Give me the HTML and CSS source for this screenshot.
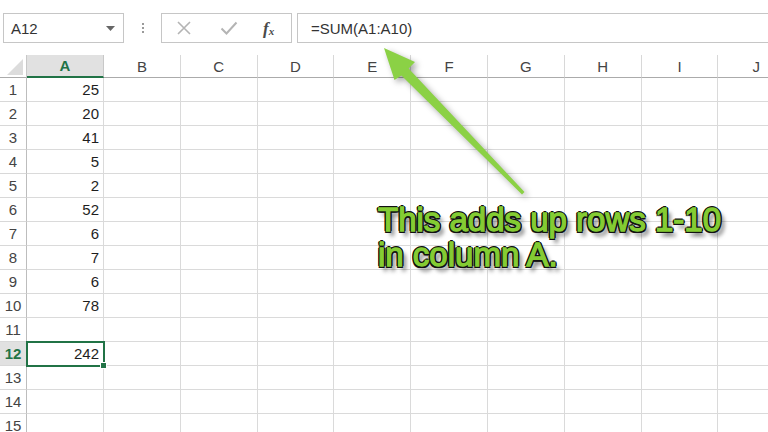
FILE: index.html
```html
<!DOCTYPE html>
<html>
<head>
<meta charset="utf-8">
<link rel="stylesheet" href="styles.css">
</head>
<body>
<div class="app">
  <div class="toolbar">
    <div class="namebox">
      <span class="nametext">A12</span>
      <svg class="dd" width="9" height="5" viewBox="0 0 9 5"><path d="M0 0H9L4.5 5Z" fill="#666"/></svg>
    </div>
    <div class="grip"><span></span><span></span><span></span></div>
    <div class="btnbox">
      <svg class="ico" width="16" height="16" viewBox="0 0 16 16"><path d="M2 2L14 14M14 2L2 14" stroke="#b4b4b4" stroke-width="1.6" fill="none"/></svg>
      <svg class="ico" width="18" height="16" viewBox="0 0 18 16"><path d="M1.5 8.5L6.5 13.5L16.5 2.5" stroke="#b4b4b4" stroke-width="2" fill="none"/></svg>
      <span class="fx">f<sub>x</sub></span>
    </div>
    <div class="formula">=SUM(A1:A10)</div>
  </div>

  <div class="sheet">
    <div class="row head">
      <div class="corner"><svg width="16" height="16" viewBox="0 0 16 16"><path d="M16 0V16H0Z" fill="#dcdcdc"/></svg></div>
      <div class="ch sel">A</div><div class="ch">B</div><div class="ch">C</div><div class="ch">D</div><div class="ch">E</div><div class="ch">F</div><div class="ch">G</div><div class="ch">H</div><div class="ch">I</div><div class="ch">J</div>
    </div>
    <div class="row"><div class="rh">1</div><div class="c n">25</div><div class="c"></div><div class="c"></div><div class="c"></div><div class="c"></div><div class="c"></div><div class="c"></div><div class="c"></div><div class="c"></div><div class="c"></div></div>
    <div class="row"><div class="rh">2</div><div class="c n">20</div><div class="c"></div><div class="c"></div><div class="c"></div><div class="c"></div><div class="c"></div><div class="c"></div><div class="c"></div><div class="c"></div><div class="c"></div></div>
    <div class="row"><div class="rh">3</div><div class="c n">41</div><div class="c"></div><div class="c"></div><div class="c"></div><div class="c"></div><div class="c"></div><div class="c"></div><div class="c"></div><div class="c"></div><div class="c"></div></div>
    <div class="row"><div class="rh">4</div><div class="c n">5</div><div class="c"></div><div class="c"></div><div class="c"></div><div class="c"></div><div class="c"></div><div class="c"></div><div class="c"></div><div class="c"></div><div class="c"></div></div>
    <div class="row"><div class="rh">5</div><div class="c n">2</div><div class="c"></div><div class="c"></div><div class="c"></div><div class="c"></div><div class="c"></div><div class="c"></div><div class="c"></div><div class="c"></div><div class="c"></div></div>
    <div class="row"><div class="rh">6</div><div class="c n">52</div><div class="c"></div><div class="c"></div><div class="c"></div><div class="c"></div><div class="c"></div><div class="c"></div><div class="c"></div><div class="c"></div><div class="c"></div></div>
    <div class="row"><div class="rh">7</div><div class="c n">6</div><div class="c"></div><div class="c"></div><div class="c"></div><div class="c"></div><div class="c"></div><div class="c"></div><div class="c"></div><div class="c"></div><div class="c"></div></div>
    <div class="row"><div class="rh">8</div><div class="c n">7</div><div class="c"></div><div class="c"></div><div class="c"></div><div class="c"></div><div class="c"></div><div class="c"></div><div class="c"></div><div class="c"></div><div class="c"></div></div>
    <div class="row"><div class="rh">9</div><div class="c n">6</div><div class="c"></div><div class="c"></div><div class="c"></div><div class="c"></div><div class="c"></div><div class="c"></div><div class="c"></div><div class="c"></div><div class="c"></div></div>
    <div class="row"><div class="rh">10</div><div class="c n">78</div><div class="c"></div><div class="c"></div><div class="c"></div><div class="c"></div><div class="c"></div><div class="c"></div><div class="c"></div><div class="c"></div><div class="c"></div></div>
    <div class="row"><div class="rh">11</div><div class="c n"></div><div class="c"></div><div class="c"></div><div class="c"></div><div class="c"></div><div class="c"></div><div class="c"></div><div class="c"></div><div class="c"></div><div class="c"></div></div>
    <div class="row"><div class="rh rsel">12</div><div class="c n active">242<span class="handle"></span></div><div class="c"></div><div class="c"></div><div class="c"></div><div class="c"></div><div class="c"></div><div class="c"></div><div class="c"></div><div class="c"></div><div class="c"></div></div>
    <div class="row"><div class="rh">13</div><div class="c n"></div><div class="c"></div><div class="c"></div><div class="c"></div><div class="c"></div><div class="c"></div><div class="c"></div><div class="c"></div><div class="c"></div><div class="c"></div></div>
    <div class="row"><div class="rh">14</div><div class="c n"></div><div class="c"></div><div class="c"></div><div class="c"></div><div class="c"></div><div class="c"></div><div class="c"></div><div class="c"></div><div class="c"></div><div class="c"></div></div>
    <div class="row"><div class="rh">15</div><div class="c n"></div><div class="c"></div><div class="c"></div><div class="c"></div><div class="c"></div><div class="c"></div><div class="c"></div><div class="c"></div><div class="c"></div><div class="c"></div></div>
  </div>

  <svg class="arrow" width="768" height="432" viewBox="0 0 768 432">
    <polygon points="384,48 415,62 408.6,68.5 524.5,192 522,194.5 401.4,75.5 394.5,80" fill="#8bd145"/>
  </svg>
  <div class="note">This adds up rows 1-10<br>in column A.</div>
</div>
</body>
</html>
```

FILE: styles.css
```css
html, body {
  margin: 0;
  padding: 0;
  background: #ffffff;
}
body {
  width: 768px;
  height: 432px;
  overflow: hidden;
  font-family: "Liberation Sans", Arial, sans-serif;
}
.app {
  position: relative;
  width: 768px;
  height: 432px;
  overflow: hidden;
}
.toolbar {
  height: 55px;
  box-sizing: border-box;
  padding: 13px 0 0 3px;
  display: flex;
  align-items: flex-start;
}
.namebox {
  width: 121px;
  height: 30px;
  box-sizing: border-box;
  border: 1px solid #c6c6c6;
  display: flex;
  align-items: center;
  justify-content: space-between;
  padding: 0 8px 0 7px;
}
.nametext {
  font-size: 15px;
  color: #333;
}
.dd { margin-top: 1px; }
.grip {
  width: 37px;
  height: 30px;
  display: flex;
  flex-direction: column;
  align-items: center;
  justify-content: center;
  gap: 2px;
}
.grip span {
  width: 2px;
  height: 2px;
  background: #9a9a9a;
}
.btnbox {
  width: 131px;
  height: 30px;
  box-sizing: border-box;
  border: 1px solid #c6c6c6;
  display: flex;
  align-items: center;
  padding: 0 0 0 14px;
}
.btnbox .ico:nth-child(1) { margin-right: 28px; }
.btnbox .ico:nth-child(2) { margin-right: 25px; }
.fx {
  font-family: "Liberation Serif", "DejaVu Serif", serif;
  font-style: italic;
  font-weight: bold;
  font-size: 17px;
  color: #4a4a4a;
  line-height: 1;
}
.fx sub {
  font-size: 11px;
  vertical-align: -1px;
}
.formula {
  flex: 1;
  margin-left: 5px;
  height: 30px;
  box-sizing: border-box;
  border: 1px solid #c6c6c6;
  border-right: none;
  display: flex;
  align-items: center;
  padding-left: 13px;
  font-size: 15px;
  color: #333;
}
.sheet {
  width: 800px;
}
.row {
  display: grid;
  grid-template-columns: 27px 77px repeat(9, 76.8px);
  height: 24px;
}
.row.head {
  height: 23px;
}
.corner {
  box-sizing: border-box;
  border-right: 1px solid #c8c8c8;
  border-bottom: 1px solid #ababab;
  display: flex;
  align-items: flex-end;
  justify-content: flex-end;
  padding: 0 3px 2px 0;
}
.ch {
  box-sizing: border-box;
  border-right: 1px solid #d8d8d8;
  border-bottom: 1px solid #ababab;
  display: flex;
  align-items: center;
  justify-content: center;
  font-size: 15px;
  color: #444;
}
.ch.sel {
  background: #e1e1e1;
  color: #217346;
  font-weight: bold;
  border-bottom: 2px solid #217346;
  border-right-color: #c8c8c8;
}
.rh {
  box-sizing: border-box;
  border-right: 1px solid #bdbdbd;
  border-bottom: 1px solid #d8d8d8;
  display: flex;
  align-items: center;
  justify-content: center;
  font-size: 15px;
  color: #444;
}
.rh.rsel {
  background: #e1e1e1;
  color: #217346;
  font-weight: bold;
}
.c {
  box-sizing: border-box;
  border-right: 1px solid #dadada;
  border-bottom: 1px solid #dadada;
  font-size: 15px;
  color: #1e1e1e;
}
.c.n {
  display: flex;
  align-items: center;
  justify-content: flex-end;
  padding-right: 4px;
}
.c.active {
  position: relative;
}
.c.active::before {
  content: "";
  position: absolute;
  left: -1px;
  top: -1px;
  right: -2px;
  bottom: -2px;
  border: 2px solid #217346;
}
.handle {
  position: absolute;
  right: -4px;
  bottom: -4px;
  width: 5px;
  height: 5px;
  background: #217346;
  border: 1px solid #ffffff;
}
.arrow {
  position: absolute;
  left: 0;
  top: 0;
  filter: drop-shadow(3px 3px 3px rgba(0, 0, 0, 0.35));
}
.note {
  position: absolute;
  left: 378px;
  top: 202px;
  font-family: "Liberation Sans", Arial, sans-serif;
  font-size: 33px;
  line-height: 35px;
  color: #84cc33;
  -webkit-text-stroke: 1.3px #84cc33;
  text-shadow:
    2px 0 0 #111, -2px 0 0 #111, 0 2px 0 #111, 0 -2px 0 #111,
    1.5px 1.5px 0 #111, -1.5px -1.5px 0 #111, 1.5px -1.5px 0 #111, -1.5px 1.5px 0 #111,
    4px 5px 4px rgba(0, 0, 0, 0.6);
  white-space: nowrap;
}
```
